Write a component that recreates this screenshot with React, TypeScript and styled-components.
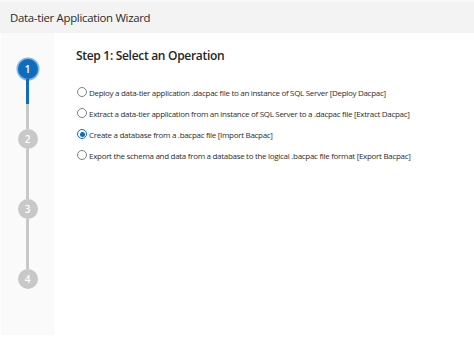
import React from "react";
import styled, { createGlobalStyle } from "styled-components";

const Global = createGlobalStyle`
  html, body { margin: 0; padding: 0; background: #ffffff; }
  body { font-family: "Open Sans", "Noto Sans", sans-serif; }
`;

const Page = styled.div`
  width: 474px;
  height: 338px;
  display: flex;
  flex-direction: column;
  overflow: hidden;
  background: #ffffff;
`;

const Header = styled.div`
  height: 33px;
  flex: none;
  background: #f3f3f3;
  border-top: 2px solid #f8f8f8;
  display: flex;
  align-items: center;
  padding: 0 10px;
  box-sizing: border-box;
  font-size: 11.4px;
  color: #2b2b2b;
  letter-spacing: -0.3px;
`;

const Body = styled.div`
  flex: 1;
  display: flex;
  padding: 0 0 3px 1px;
`;

const Sidebar = styled.div`
  width: 53px;
  flex: none;
  background: #fafafa;
  display: flex;
  flex-direction: column;
  align-items: center;
  padding-top: 26px;
  box-sizing: border-box;
`;

const StepItem = styled.div<{ $last?: boolean }>`
  display: flex;
  flex-direction: column;
  align-items: center;
  height: ${(p) => (p.$last ? "auto" : "70px")};
`;

const Circle = styled.div<{ $active?: boolean }>`
  width: 20px;
  height: 20px;
  border-radius: 50%;
  background: ${(p) => (p.$active ? "#0f6cbd" : "#c8c8c8")};
  box-shadow: ${(p) => (p.$active ? "0 0 0 1.5px #7fb2e5" : "none")};
  color: #ffffff;
  font-size: 10px;
  font-weight: 600;
  display: flex;
  align-items: center;
  justify-content: center;
  flex: none;
`;

const Connector = styled.div<{ $progress: number }>`
  width: 3px;
  flex: 1;
  background: linear-gradient(
    to bottom,
    #0f6cbd 0,
    #0f6cbd ${(p) => p.$progress}px,
    #c8c8c8 ${(p) => p.$progress}px,
    #c8c8c8 100%
  );
`;

const Content = styled.div`
  flex: 1;
  padding: 14px 0 0 22px;
  color: #2b2b2b;
`;

const Title = styled.div`
  font-size: 12px;
  font-weight: 600;
  letter-spacing: -0.3px;
  color: #252525;
  margin-bottom: 21px;
`;

const Options = styled.div`
  display: flex;
  flex-direction: column;
  gap: 7px;
`;

const Option = styled.label`
  display: flex;
  align-items: center;
  gap: 2px;
  height: 14px;
  font-size: 8px;
  letter-spacing: -0.3px;
  color: #2e2e2e;
  margin-left: 1px;
`;

const Radio = styled.span<{ $checked?: boolean }>`
  width: 10px;
  height: 10px;
  border-radius: 50%;
  border: 1px solid ${(p) => (p.$checked ? "#0f6cbd" : "#808080")};
  box-sizing: border-box;
  display: flex;
  align-items: center;
  justify-content: center;
  flex: none;
  &::after {
    content: "";
    width: 5px;
    height: 5px;
    border-radius: 50%;
    background: ${(p) => (p.$checked ? "#0f6cbd" : "transparent")};
  }
`;

const steps = ["1", "2", "3", "4"];
const options = [
  "Deploy a data-tier application .dacpac file to an instance of SQL Server [Deploy Dacpac]",
  "Extract a data-tier application from an instance of SQL Server to a .dacpac file [Extract Dacpac]",
  "Create a database from a .bacpac file [Import Bacpac]",
  "Export the schema and data from a database to the logical .bacpac file format [Export Bacpac]",
];

export default function App() {
  return (
    <Page>
      <Global />
      <Header>Data-tier Application Wizard</Header>
      <Body>
        <Sidebar>
          {steps.map((s, i) => (
            <StepItem key={s} $last={i === steps.length - 1}>
              <Circle $active={i === 0}>{s}</Circle>
              {i < steps.length - 1 && <Connector $progress={i === 0 ? 25 : 0} />}
            </StepItem>
          ))}
        </Sidebar>
        <Content>
          <Title>Step 1: Select an Operation</Title>
          <Options>
            {options.map((o, i) => (
              <Option key={i}>
                <Radio $checked={i === 2} />
                {o}
              </Option>
            ))}
          </Options>
        </Content>
      </Body>
    </Page>
  );
}
